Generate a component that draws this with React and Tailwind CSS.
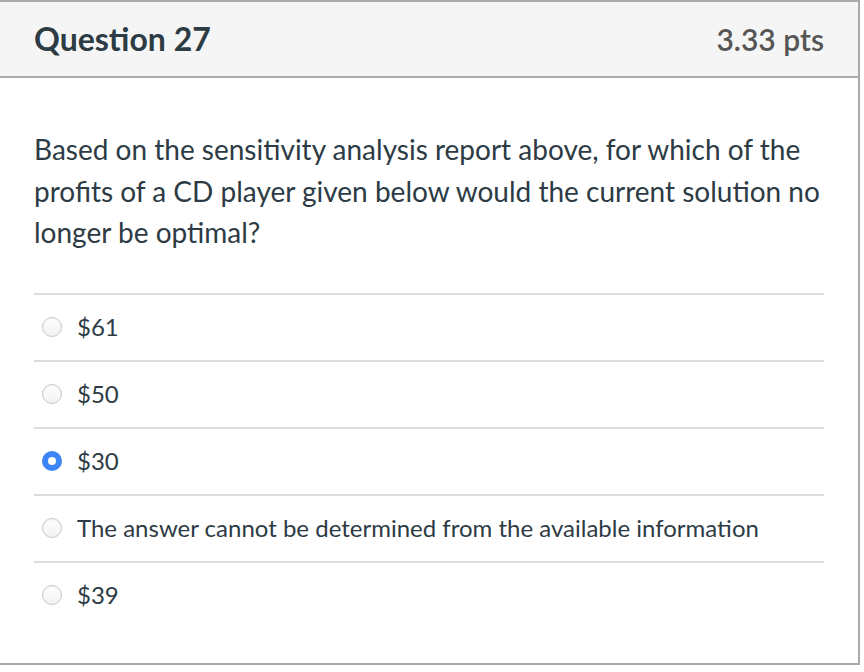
import React from "react";

const options = [
  { label: "$61", checked: false },
  { label: "$50", checked: false },
  { label: "$30", checked: true },
  { label: "The answer cannot be determined from the available information", checked: false },
  { label: "$39", checked: false },
];

const Radio = ({ checked }) =>
  checked ? (
    <span className="flex h-[20px] w-[20px] shrink-0 items-center justify-center rounded-full bg-[#3d85f5]">
      <span className="h-[8px] w-[8px] rounded-full bg-white" />
    </span>
  ) : (
    <span className="h-[20px] w-[20px] shrink-0 rounded-full border border-[#c8c8c8] bg-gradient-to-b from-white to-[#f1f1f1] shadow-[inset_0_1px_1px_rgba(0,0,0,0.06)]" />
  );

const App = () => {
  return (
    <div
      className="h-[672px] w-[864px] bg-white"
      style={{ fontFamily: "Lato, 'Open Sans', sans-serif" }}
    >
      <div className="flex h-[665px] w-[860px] flex-col border-b-2 border-r-2 border-t-2 border-[#aaaaaa]">
        <div className="flex h-[76px] shrink-0 items-center justify-between border-b-2 border-[#aaaaaa] bg-[#f5f5f5] px-[34px]">
          <h2 className="text-[32px] font-bold text-[#2d3b45]">Question 27</h2>
          <span className="text-[30px] font-semibold text-[#555555]">3.33 pts</span>
        </div>

        <div className="px-[34px] pt-[51px]">
          <p className="text-[28px] leading-[41.5px] text-[#2d3b45]">
            Based on the sensitivity analysis report above, for which of the profits of a CD
            player given below would the current solution no longer be optimal?
          </p>

          <div className="mt-[39px]">
            {options.map((o, i) => (
              <div
                key={i}
                className="flex h-[67px] items-center gap-[15px] border-t-2 border-[#dddddd] pl-[8px]"
              >
                <Radio checked={o.checked} />
                <span className="text-[24px] text-[#2d3b45]">{o.label}</span>
              </div>
            ))}
          </div>
        </div>
      </div>
    </div>
  );
};

export default App;
